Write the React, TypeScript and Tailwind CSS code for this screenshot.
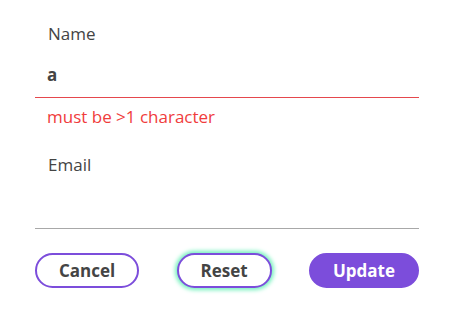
export default function App() {
  return (
    <div className="min-h-screen bg-white font-['Open_Sans','Noto_Sans',sans-serif] text-[#444]">
      <form className="pl-[35px] pr-[48px] pt-[22px]">
        {/* name */}
        <label className="block pl-[13px] text-[17px] leading-6">Name</label>
        <div className="border-b border-[#e5484d] pt-[17px] pb-[10px] pl-[12px] text-[17px] font-bold leading-6">a</div>
        <p className="mt-[7px] pl-[12px] text-[17px] leading-6 text-[#f03c3c]">must be &gt;1 character</p>

        {/* email */}
        <label className="mt-6 block pl-[13px] text-[17px] leading-6">Email</label>
        <div className="h-[52px] border-b border-[#a8a8a8]" />

        {/* actions */}
        <div className="mt-6 flex justify-between">
          <button type="button" className="h-[35px] rounded-full border-2 border-[#7c4ddb] bg-white px-[22px] text-[17px] font-bold text-[#444]">
            Cancel
          </button>
          <button type="button" className="h-[35px] rounded-full border-2 border-[#7c4ddb] bg-white px-[22px] text-[17px] font-bold text-[#444] shadow-[0_0_4px_2px_#72f0bc]">
            Reset
          </button>
          <button type="button" className="h-[35px] rounded-full border-2 border-[#7c4ddb] bg-[#7c4ddb] px-[22px] text-[17px] font-bold text-white">
            Update
          </button>
        </div>
      </form>
    </div>
  )
}
